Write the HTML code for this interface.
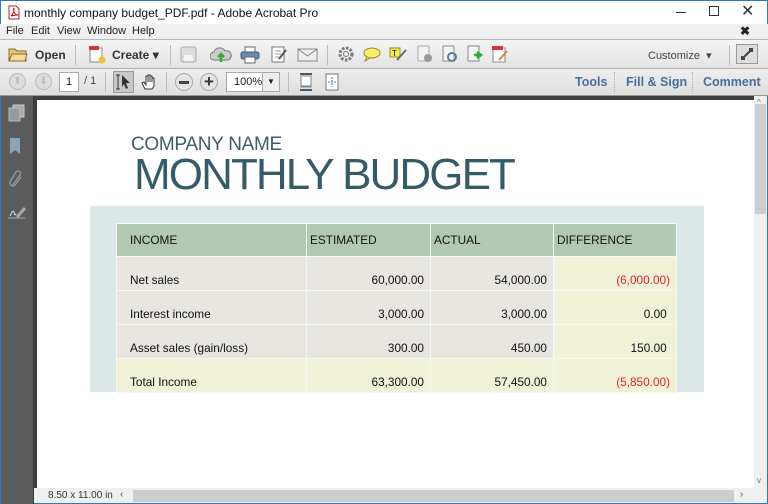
<!DOCTYPE html>
<html><head><meta charset="utf-8"><style>
*{margin:0;padding:0;box-sizing:border-box}
body{width:768px;height:504px;overflow:hidden;font-family:"Liberation Sans",sans-serif;background:#fff;position:relative;font-size:12px;color:#222}
.abs{position:absolute}
#title{left:0;top:0;width:768px;height:24px;background:#fff;border:1px solid #2b79c7;border-bottom:none}
#menu{left:0;top:24px;width:768px;height:15px;background:#f0f0f0;font-size:11px}
#menu span{position:absolute;top:1px}
#tb1{left:0;top:39px;width:768px;height:30px;background:linear-gradient(#f4f4f4,#e4e4e4);border-top:1px solid #b8b8b8;border-bottom:1px solid #b0b0b0}
#tb2{left:0;top:69px;width:768px;height:27px;background:linear-gradient(#eeeeee,#dedede);border-bottom:1px solid #999}
.sep{position:absolute;width:1px;background:#bbb}
.ic{position:absolute}
#side{left:0;top:96px;width:34px;height:408px;background:#5b5b5b;border-left:1px solid #2b79c7;border-right:1px solid #3a3a3a}
#dark{left:34px;top:96px;width:720px;height:392px;background:#3e3e3e}
#page{left:37px;top:100px;width:717px;height:388px;background:#fff}
#vs{left:754px;top:96px;width:14px;height:392px;background:#f0f0f0;border-right:1px solid #2b79c7}
#bot{left:34px;top:488px;width:734px;height:16px;background:#f0f0f0;border-bottom:1px solid #2b79c7;border-right:1px solid #2b79c7}
.band{left:90px;top:206px;width:614px;height:186px;background:#dce8e8}
table{position:absolute;left:116px;top:223px;border-collapse:collapse;font-size:11.8px;color:#111}
td{height:34px;padding:0 12px 3px 13px;border:1px solid #f6f6f6;vertical-align:bottom}
td.r{text-align:right;padding-right:6px}
tr.h td{background:#b1c8b4;height:33px;padding:0 0 0 3px;vertical-align:middle}
tr.h td:first-child{padding-left:13px}
.g{background:#e8e6e1}
.y{background:#f0f2d8}
.red{color:#e8242a}
</style></head><body>
<div id="title" class="abs">
 <svg class="ic" style="left:7px;top:4px" width="12" height="15"><path d="M1 1h7l3 3v10H1z" fill="#fff" stroke="#b22"/><path d="M3 11c2-2 3-5 3-7s-1 0 0 3 3 3 4 3-4 0-7 1" fill="none" stroke="#c00" stroke-width=".9"/></svg>
 <span class="abs" style="left:23px;top:5px;font-size:12px;color:#111">monthly company budget_PDF.pdf - Adobe Acrobat Pro</span>
 <span class="abs" style="left:675px;top:11px;width:10px;height:1px;background:#333"></span>
 <span class="abs" style="left:708px;top:5px;width:10px;height:10px;border:1px solid #333"></span>
 <span class="abs" style="left:740px;top:0px;font-size:16px;color:#333">✕</span>
</div>
<div id="menu" class="abs"><span style="left:6px">File</span><span style="left:31px">Edit</span><span style="left:57px">View</span><span style="left:87px">Window</span><span style="left:132px">Help</span><span style="left:740px;font-weight:bold;font-size:12px;top:0">✖</span></div>
<div id="tb1" class="abs">
 <svg class="ic" style="left:8px;top:6px" width="20" height="16"><path d="M1 3h6l2 2h9v10H1z" fill="#e8c878" stroke="#8a6a2a"/><path d="M1 15l3-7h15l-2 7z" fill="#f4dc9a" stroke="#8a6a2a"/></svg>
 <span class="abs" style="left:35px;top:8px;font-weight:bold;font-size:12px;color:#333">Open</span>
 <div class="sep" style="left:75px;top:5px;height:20px"></div>
 <svg class="ic" style="left:87px;top:4px" width="20" height="20"><rect x="3" y="4" width="12" height="14" fill="#fff" stroke="#888"/><rect x="2" y="2" width="10" height="4" fill="#d33"/><circle cx="15" cy="16" r="3.5" fill="#f2c12e"/></svg>
 <span class="abs" style="left:112px;top:8px;font-weight:bold;font-size:12px;color:#333">Create ▾</span>
 <div class="sep" style="left:170px;top:5px;height:20px"></div>
 <svg class="ic" style="left:180px;top:6px" width="18" height="18"><rect x="1" y="1" width="15" height="15" rx="2" fill="#ddd" stroke="#aaa"/><rect x="4" y="9" width="9" height="6" fill="#f5f5f5"/></svg>
 <svg class="ic" style="left:210px;top:6px" width="22" height="18"><path d="M4 14a4 4 0 010-8 6 6 0 0111-1 4 4 0 013 9z" fill="#ccc" stroke="#777"/><path d="M11 16V9M8 11l3-3 3 3" stroke="#3a3" stroke-width="2.5" fill="none"/></svg>
 <svg class="ic" style="left:240px;top:6px" width="20" height="18"><rect x="5" y="1" width="10" height="5" fill="#fff" stroke="#666"/><rect x="1" y="6" width="18" height="7" rx="2" fill="#6a8ab0" stroke="#456"/><rect x="5" y="11" width="10" height="6" fill="#fff" stroke="#666"/></svg>
 <svg class="ic" style="left:270px;top:5px" width="18" height="19"><rect x="2" y="2" width="12" height="15" fill="#fff" stroke="#777"/><path d="M5 6h6M5 9h6M5 12h4" stroke="#99a"/><path d="M9 14l7-9" stroke="#555" stroke-width="2"/></svg>
 <svg class="ic" style="left:297px;top:8px" width="21" height="14"><rect x="1" y="1" width="19" height="12" fill="#eee" stroke="#888"/><path d="M1 1l9.5 7L20 1" fill="none" stroke="#888"/></svg>
 <div class="sep" style="left:327px;top:5px;height:20px"></div>
 <svg class="ic" style="left:338px;top:6px" width="16" height="16"><circle cx="8" cy="8" r="6" fill="none" stroke="#777" stroke-width="3" stroke-dasharray="2.5 1.5"/><circle cx="8" cy="8" r="2.5" fill="none" stroke="#777"/></svg>
 <svg class="ic" style="left:363px;top:7px" width="18" height="15"><ellipse cx="9" cy="6" rx="8" ry="5" fill="#f6ef6e" stroke="#998a20"/><path d="M4 10l-2 4 5-3" fill="#f6ef6e" stroke="#998a20"/></svg>
 <svg class="ic" style="left:388px;top:6px" width="20" height="16"><rect x="2" y="2" width="10" height="9" fill="#f6ef3e" stroke="#998a20"/><text x="4" y="10" font-size="8" font-family="Liberation Sans">T</text><path d="M9 14l9-10" stroke="#666" stroke-width="2"/></svg>
 <svg class="ic" style="left:416px;top:5px" width="18" height="19"><rect x="2" y="1" width="11" height="15" fill="#f4f4f4" stroke="#aaa"/><circle cx="12" cy="13" r="4" fill="#999"/></svg>
 <svg class="ic" style="left:441px;top:5px" width="18" height="19"><rect x="2" y="1" width="11" height="15" fill="#f4f4f4" stroke="#888"/><circle cx="11" cy="12" r="4" fill="none" stroke="#5a7aa0" stroke-width="2"/></svg>
 <svg class="ic" style="left:466px;top:5px" width="18" height="19"><rect x="2" y="1" width="11" height="15" fill="#f4f4f4" stroke="#888"/><path d="M8 10h6M11 7l4 3-4 3" stroke="#3a3" stroke-width="2.5" fill="none"/></svg>
 <svg class="ic" style="left:491px;top:5px" width="18" height="19"><rect x="2" y="3" width="12" height="14" fill="#fff" stroke="#888"/><rect x="1" y="1" width="11" height="4" fill="#d33"/><path d="M8 15l8-9" stroke="#c83" stroke-width="2"/></svg>
 <span class="abs" style="left:648px;top:9px;font-size:11px;color:#444">Customize&nbsp;&nbsp;▾</span>
 <div class="sep" style="left:729px;top:5px;height:20px"></div>
 <div class="abs" style="left:736px;top:4px;width:22px;height:20px;background:#ddd;border:1px solid #999"><svg width="20" height="18"><path d="M5 14l10-10M12 4h3v3M8 14H5v-3" stroke="#444" stroke-width="2" fill="none"/></svg></div>
</div>
<div id="tb2" class="abs">
 <div class="abs" style="left:9px;top:4px;width:17px;height:17px;border-radius:50%;background:#ddd;border:1px solid #bbb;color:#bbb;font-size:10px;text-align:center;line-height:15px">⬆</div>
 <div class="abs" style="left:35px;top:4px;width:17px;height:17px;border-radius:50%;background:#ddd;border:1px solid #bbb;color:#bbb;font-size:10px;text-align:center;line-height:15px">⬇</div>
 <div class="abs" style="left:59px;top:3px;width:20px;height:20px;background:#fff;border:1px solid #aaa;font-size:11px;text-align:center;line-height:18px">1</div>
 <span class="abs" style="left:84px;top:6px;font-size:11px;color:#444">/ 1</span>
 <div class="sep" style="left:105px;top:3px;height:20px"></div>
 <div class="abs" style="left:113px;top:2px;width:21px;height:22px;background:#c8c8c8;border:1px solid #999"><svg width="20" height="20"><path d="M4 3v14M2 3h4M2 17h4" stroke="#333"/><path d="M8 3l8 8h-4l2 5-2 1-2-5-2 3z" fill="#333"/></svg></div>
 <svg class="ic" style="left:140px;top:4px" width="18" height="18"><path d="M5 16l-3-6 2-1 2 3V3h2v6V2h2v7V3h2v6V5h2v8l-2 3z" fill="#fff" stroke="#333"/></svg>
 <div class="sep" style="left:166px;top:3px;height:20px"></div>
 <div class="abs" style="left:175px;top:4px;width:18px;height:18px;border-radius:50%;background:#e4e4e4;border:1px solid #aaa"><div style="margin:7px 3px;width:10px;height:3px;background:#444"></div></div>
 <div class="abs" style="left:200px;top:4px;width:18px;height:18px;border-radius:50%;background:#e4e4e4;border:1px solid #aaa;color:#333;font-weight:bold;font-size:17px;text-align:center;line-height:16px">+</div>
 <div class="abs" style="left:226px;top:3px;width:54px;height:20px;background:#fff;border:1px solid #aaa;font-size:11px;line-height:18px;padding-left:7px">100%</div>
 <div class="abs" style="left:262px;top:3px;width:18px;height:20px;background:#eee;border:1px solid #aaa;font-size:8px;text-align:center;line-height:18px">▼</div>
 <div class="sep" style="left:288px;top:3px;height:20px"></div>
 <svg class="ic" style="left:298px;top:3px" width="16" height="20"><path d="M2 2h12M2 18h12" stroke="#555" stroke-width="2"/><rect x="3" y="4" width="10" height="11" fill="#fff" stroke="#888"/><path d="M3 14h10" stroke="#38c"/></svg>
 <svg class="ic" style="left:324px;top:3px" width="16" height="20"><rect x="2" y="2" width="12" height="16" fill="#fff" stroke="#777"/><path d="M8 5v10M4 10h8" stroke="#38c" stroke-dasharray="2 1"/></svg>
 <span class="abs" style="left:575px;top:6px;font-weight:bold;font-size:12.5px;color:#4a6e9a">Tools</span>
 <div class="abs" style="left:614px;top:3px;height:20px;border-left:1px dotted #aaa"></div>
 <span class="abs" style="left:626px;top:6px;font-weight:bold;font-size:12.5px;color:#4a6e9a">Fill &amp; Sign</span>
 <div class="abs" style="left:692px;top:3px;height:20px;border-left:1px dotted #aaa"></div>
 <span class="abs" style="left:703px;top:6px;font-weight:bold;font-size:12.5px;color:#4a6e9a">Comment</span>
</div>
<div id="side" class="abs">
 <svg class="ic" style="left:7px;top:8px" width="18" height="18"><rect x="5" y="1" width="11" height="12" fill="#aaa" stroke="#ccc"/><rect x="1" y="4" width="11" height="13" fill="#999" stroke="#bbb"/></svg>
 <svg class="ic" style="left:8px;top:41px" width="14" height="18"><path d="M1 1h10v16l-5-4-5 4z" fill="#8aa4bc"/></svg>
 <svg class="ic" style="left:7px;top:74px" width="16" height="20"><path d="M4 16l8-11a2.5 2.5 0 00-4-3L2 12a3 3 0 005 3l6-8" fill="none" stroke="#999" stroke-width="1.3"/></svg>
 <svg class="ic" style="left:6px;top:110px" width="20" height="14"><path d="M1 12h17" stroke="#aaa"/><path d="M3 10c2-4 3-6 4-4s0 4 2 2" stroke="#ddd" fill="none"/><path d="M10 11l8-9" stroke="#aaa" stroke-width="3"/></svg>
</div>
<div id="dark" class="abs"></div>
<div id="page" class="abs"></div>
<div class="abs" style="left:131px;top:134px;font-size:19px;color:#3c5e6a;letter-spacing:-.3px">COMPANY NAME</div>
<div class="abs" style="left:134px;top:150px;font-size:44px;color:#345c68;letter-spacing:-1.9px;white-space:nowrap">MONTHLY BUDGET</div>
<div class="abs band"></div>
<table>
<tr class="h"><td style="width:190px">INCOME</td><td style="width:124px">ESTIMATED</td><td style="width:123px">ACTUAL</td><td style="width:123px">DIFFERENCE</td></tr>
<tr><td class="g">Net sales</td><td class="g r">60,000.00</td><td class="g r">54,000.00</td><td class="y r red">(6,000.00)</td></tr>
<tr><td class="g">Interest income</td><td class="g r">3,000.00</td><td class="g r">3,000.00</td><td class="y r">0.00&nbsp;</td></tr>
<tr><td class="g">Asset sales (gain/loss)</td><td class="g r">300.00</td><td class="g r">450.00</td><td class="y r">150.00&nbsp;</td></tr>
<tr><td class="y">Total Income</td><td class="y r">63,300.00</td><td class="y r">57,450.00</td><td class="y r red">(5,850.00)</td></tr>
</table>
<div id="vs" class="abs"><div style="position:absolute;left:1px;top:8px;width:11px;height:110px;background:#cdcdcd"></div><span style="position:absolute;left:3px;top:2px;font-size:8px;color:#777">^</span><span style="position:absolute;left:3px;top:380px;font-size:8px;color:#777">v</span></div>
<div id="bot" class="abs">
 <span class="abs" style="left:14px;top:2px;font-size:10px;color:#333">8.50 x 11.00 in</span>
 <span class="abs" style="left:86px;top:1px;font-size:10px;color:#555">‹</span>
 <div class="abs" style="left:99px;top:2px;width:601px;height:12px;background:#cdcdcd"></div>
 <span class="abs" style="left:706px;top:1px;font-size:10px;color:#555">›</span>
</div>
</body></html>
